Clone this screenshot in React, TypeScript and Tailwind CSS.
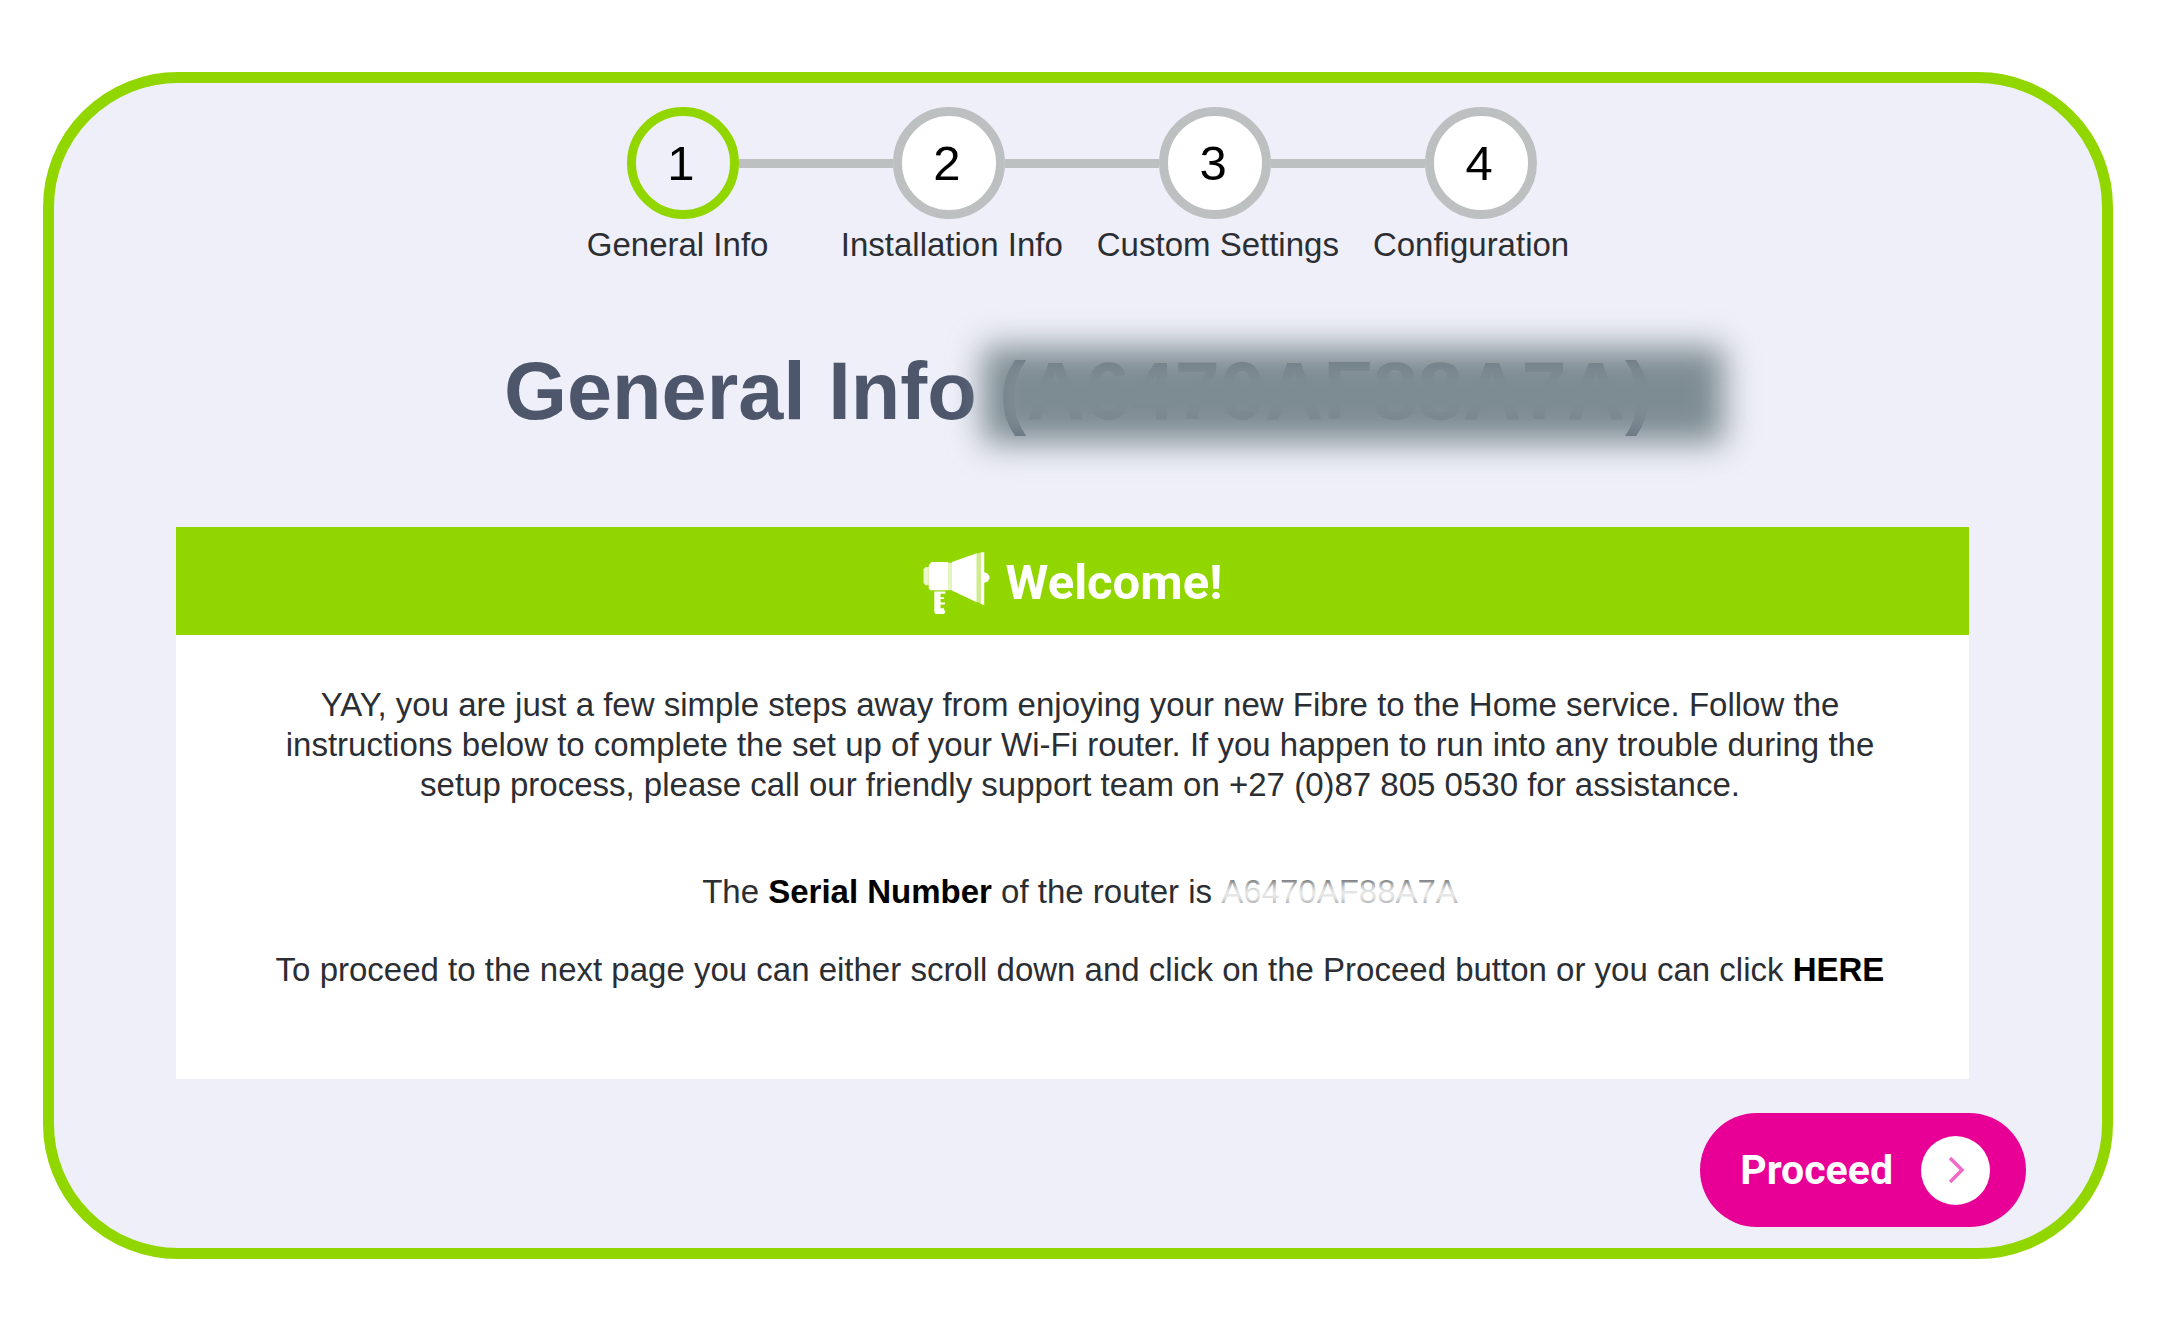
import { Fragment } from "react"
import clsx from "clsx"

const steps = ["General Info", "Installation Info", "Custom Settings", "Configuration"]

const serialNumber = "A6470AF88A7A"

function MegaphoneIcon() {
  return (
    <svg viewBox="124 90 204 190" className="h-[62px] w-[67px]" fill="currentColor" aria-hidden="true">
      <path d="M141 136v56h-10l-6-7v-42l6-7z" opacity="0.8" />
      <path d="M149 121h51v86h-54l-5-6v-70z" />
      <path d="M200 123h12v84h-12z" opacity="0.75" />
      <path d="M212 121l76-27v150l-76-36z" />
      <path d="M288 94l12-2v155l-12-4z" opacity="0.55" />
      <path d="M300 91h11v61l10 4 6 8v8l-6 9-10 3v69l-11-4z" />
      {/* Handle */}
      <path d="M158 211h34v7h-15v11h11v5h-11v11h14v6h-14v11h11v6l4 5-4 7h-26l-4-5z" />
    </svg>
  )
}

function StepIndicator({ current }: { current: number }) {
  return (
    <nav aria-label="Setup steps" className="w-fit">
      {/* Circles and the lines between them */}
      <div className="flex items-center pr-8 pl-10">
        {steps.map((step, index) => (
          <Fragment key={step}>
            {index > 0 && <div className="h-[9px] flex-1 bg-[#bdc0c0]" />}
            <div
              className={clsx(
                "flex size-28 shrink-0 items-center justify-center rounded-full border-[9px] pr-1 text-[49px] text-black",
                index + 1 === current ? "border-[#92d600]" : "border-[#bdc0c0] bg-white"
              )}
            >
              {index + 1}
            </div>
          </Fragment>
        ))}
      </div>

      {/* Labels */}
      <ol className="mt-1.5 flex gap-[34px]">
        {steps.map((step) => (
          <li key={step} className="whitespace-nowrap first:min-w-[220px]">
            {step}
          </li>
        ))}
      </ol>
    </nav>
  )
}

export default function App() {
  return (
    <main className="min-h-screen bg-white pt-[72px] pr-[51px] pb-20 pl-[43px] font-['Liberation_Sans',Arial,sans-serif] text-[33px] leading-10 text-[#2b2e33]">
      <div className="flex flex-col items-center rounded-[135px] border-[11px] border-[#92d600] bg-[#eeeff8] pt-6 pb-[21px]">
        <StepIndicator current={1} />

        {/* Page title */}
        <h1 className="mt-[78px] text-[81px] leading-24 font-bold whitespace-nowrap text-[#4d566b]">
          General Info{" "}
          <span className="relative inline-block">
            ({serialNumber})
            <span className="absolute top-1 -right-[72px] -bottom-1 -left-4 bg-[#7d8b92] blur-[16px]" />
          </span>
        </h1>

        {/* Welcome panel */}
        <div className="mt-[88px] w-full pr-[133px] pl-[122px]">
          <section className="bg-white">
            <h2 className="flex h-[108px] items-center justify-center gap-4 bg-[#92d600] pt-1 font-['Roboto',sans-serif] text-[49px] font-bold text-white">
              <MegaphoneIcon />
              Welcome!
            </h2>
            <div className="pt-[50px] pr-[79px] pb-[89px] pl-[94px] text-center">
              <p>
                YAY, you are just a few simple steps away from enjoying your new Fibre to the Home service. Follow the
                instructions below to complete the set up of your Wi-Fi router. If you happen to run into any trouble
                during the setup process, please call our friendly support team on +27 (0)87 805 0530 for assistance.
              </p>
              <p className="mt-[67px]">
                The <strong className="text-black">Serial Number</strong> of the router is{" "}
                <span className="relative inline-block overflow-clip">
                  {serialNumber}
                  <span className="absolute -inset-x-6 top-2.5 bottom-1.5 bg-white blur-[8px]" />
                </span>
              </p>
              <p className="mt-[38px]">
                To proceed to the next page you can either scroll down and click on the Proceed button or you can click{" "}
                <a href="#proceed" className="font-bold text-black">
                  HERE
                </a>
              </p>
            </div>
          </section>
        </div>

        {/* Footer action */}
        <button
          id="proceed"
          type="button"
          className="mt-[34px] mr-[76px] flex h-[114px] items-center gap-7 self-end rounded-full bg-[#e80096] pr-9 pl-10 font-['Roboto',sans-serif] text-[41px] font-bold text-white"
        >
          Proceed
          <span className="flex size-[69px] items-center justify-center rounded-full bg-white text-[#f06ac8]">
            <svg viewBox="0 0 18 28" className="h-7 w-[18px]" fill="none" stroke="currentColor" strokeWidth="3.5" aria-hidden="true">
              <path d="M3 2l12 12L3 26" />
            </svg>
          </span>
        </button>
      </div>
    </main>
  )
}
